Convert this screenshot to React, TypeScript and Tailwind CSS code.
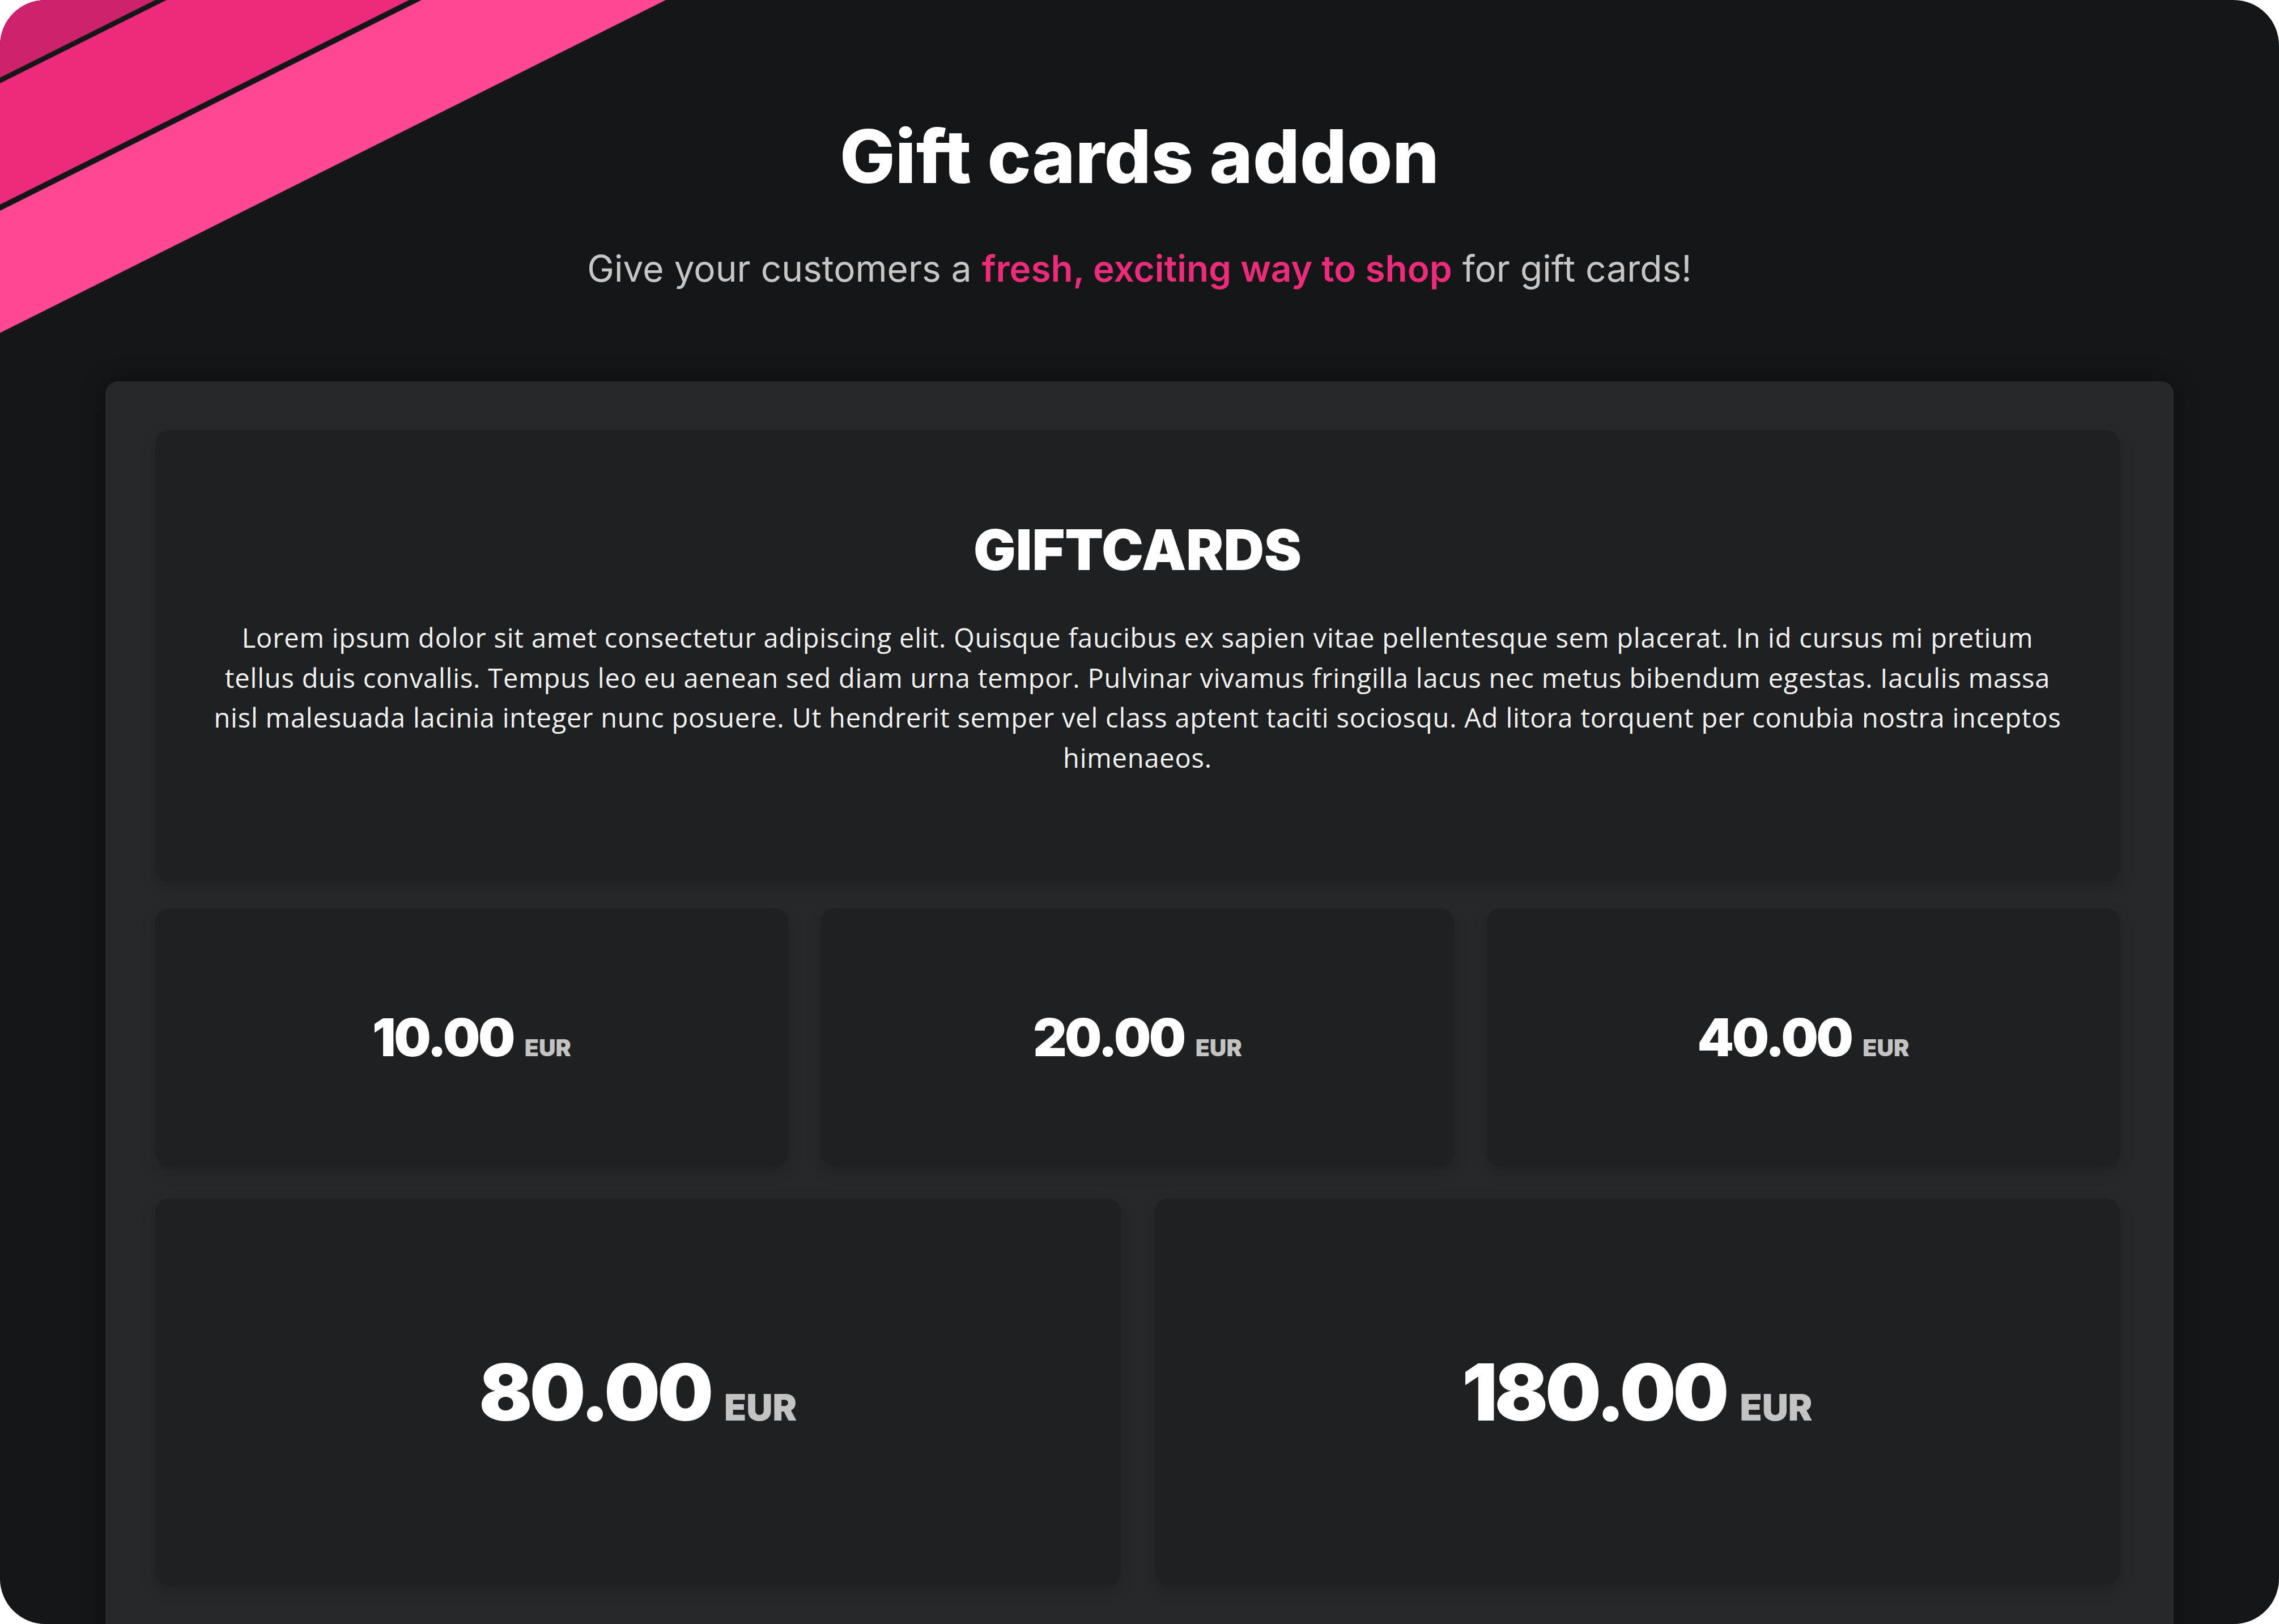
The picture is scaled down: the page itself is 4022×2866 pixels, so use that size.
import React from "react";

const Stripes = () => (
  <svg
    className="absolute left-0 top-0 pointer-events-none"
    width="1200"
    height="600"
    viewBox="0 0 1200 600"
  >
    <polygon points="0,0 274,0 0,137" fill="#cf226c" />
    <polygon points="294,0 722,0 0,361 0,147" fill="#ee2a7b" />
    <polygon points="744,0 1175,0 0,587.5 0,372" fill="#ff4893" />
  </svg>
);

const Price = ({ value, big }: { value: string; big?: boolean }) => (
  <div
    className={
      big
        ? "flex h-[682px] items-center justify-center rounded-[24px] bg-[#1f2022] shadow-[0_10px_24px_rgba(0,0,0,0.18)]"
        : "flex h-[455px] items-center justify-center rounded-[24px] bg-[#1f2022] shadow-[0_10px_24px_rgba(0,0,0,0.18)]"
    }
  >
    <div className="flex items-baseline font-['Inter',sans-serif]">
      <span
        className={
          big
            ? "text-[139px] font-black leading-none text-white tracking-[-5px]"
            : "text-[92px] font-black leading-none text-white tracking-[-3.5px]"
        }
      >
        {value}
      </span>
      <span
        className={
          big
            ? "ml-[24px] text-[64px] font-black leading-none text-[#c3c3c3]"
            : "ml-[20px] text-[41px] font-black leading-none text-[#c3c3c3]"
        }
      >
        EUR
      </span>
    </div>
  </div>
);

export default function App() {
  return (
    <div className="h-[2866px] w-[4022px] bg-white">
      <div className="relative h-full w-full overflow-hidden rounded-[80px] bg-[#151618]">
        <Stripes />
        <div className="relative flex flex-col items-center">
          <h1 className="pt-[211px] text-[130px] font-extrabold leading-none text-white font-['Inter',sans-serif]">
            Gift cards addon
          </h1>
          <p className="mt-[101px] text-[64px] leading-none text-[#c6c6c6] font-['Inter',sans-serif]">
            Give your customers a{" "}
            <span className="font-semibold text-[#ee2a7b]">
              fresh, exciting way to shop
            </span>{" "}
            for gift cards!
          </p>
        </div>
        <div className="relative mx-[186px] mt-[167px] h-[2400px] rounded-[22px] border-r-4 border-[#2b2b2c] bg-[#27282a] pb-[88px] pl-[88px] pr-[91px] pt-[86px] shadow-[0_0_40px_rgba(0,0,0,0.4)]">
          <div className="rounded-[24px] bg-[#1f2022] px-[40px] pb-[184px] pt-[162px] text-center shadow-[0_10px_24px_rgba(0,0,0,0.18)]">
            <h2 className="text-[99px] font-black leading-none text-white font-['Inter',sans-serif]">
              GIFTCARDS
            </h2>
            <p className="mt-[70px] whitespace-nowrap text-[47px] font-medium leading-[70.5px] tracking-[0.8px] text-[#f2f2f2] font-['Open_Sans',sans-serif]">
              Lorem ipsum dolor sit amet consectetur adipiscing elit. Quisque faucibus ex sapien vitae pellentesque sem placerat. In id cursus mi pretium
              <br />
              tellus duis convallis. Tempus leo eu aenean sed diam urna tempor. Pulvinar vivamus fringilla lacus nec metus bibendum egestas. Iaculis massa
              <br />
              nisl malesuada lacinia integer nunc posuere. Ut hendrerit semper vel class aptent taciti sociosqu. Ad litora torquent per conubia nostra inceptos
              <br />
              himenaeos.
            </p>
          </div>
          <div className="mt-[47px] grid grid-cols-3 gap-[58px]">
            <Price value="10.00" />
            <Price value="20.00" />
            <Price value="40.00" />
          </div>
          <div className="mt-[57px] grid grid-cols-2 gap-[60px]">
            <Price value="80.00" big />
            <Price value="180.00" big />
          </div>
        </div>
      </div>
    </div>
  );
}
